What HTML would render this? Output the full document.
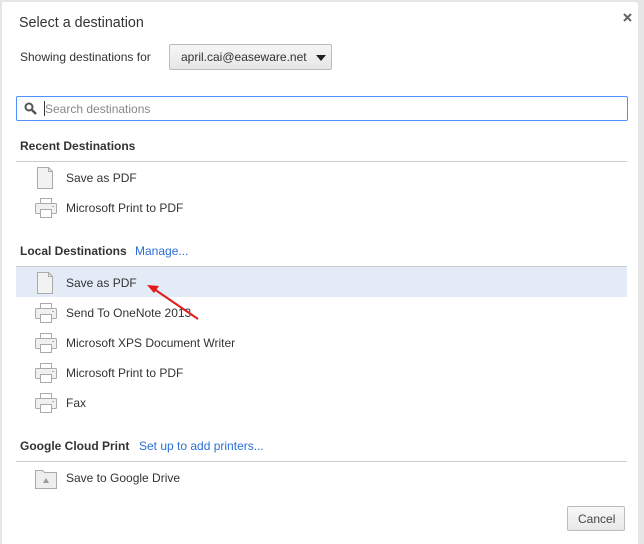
<!DOCTYPE html>
<html><head><style>
body{margin:0;width:644px;height:544px;background:#e6e6e6;font-family:"Liberation Sans",sans-serif;color:#333;position:relative;overflow:hidden}
.dlg{position:absolute;left:2px;top:2px;width:636px;height:542px;background:#fff;border-radius:0 3px 0 0}
.a{position:absolute;white-space:nowrap}
.t{font-size:12px}
.h{font-size:12px;font-weight:bold;color:#333}
.lnk{color:#2a6fd6;font-size:12px}
.line{position:absolute;left:14px;width:611px;height:1px;background:#ccc}
</style></head><body>
<div class="dlg">
<div class="a" style="left:17px;top:13px;font-size:14.3px;color:#333">Select a destination</div>
<svg class="a" style="left:621px;top:11px" width="9" height="9"><path d="M1 1L8 8M8 1L1 8" stroke="#666" stroke-width="2"/></svg>
<div class="a t" style="left:18px;top:48px">Showing destinations for</div>
<div class="a" style="left:167px;top:42px;width:161px;height:24px;border:1px solid #bbb;border-radius:2px;background:linear-gradient(#f6f6f6,#e6e6e6)"></div>
<div class="a t" style="left:179px;top:48px">april.cai@easeware.net</div>
<div class="a" style="left:314px;top:53px;width:0;height:0;border-left:5px solid transparent;border-right:5px solid transparent;border-top:6px solid #222"></div>
<div class="a" style="left:14px;top:94px;width:610px;height:23px;border:1px solid #4d90fe;border-radius:2px"></div>
<svg class="a" style="left:22px;top:100px" width="13" height="13"><circle cx="5" cy="5" r="3.5" fill="none" stroke="#555" stroke-width="2"/><line x1="8" y1="8" x2="12" y2="12" stroke="#555" stroke-width="2.5"/></svg>
<div class="a" style="left:42px;top:99px;width:1px;height:15px;background:#333"></div>
<div class="a t" style="left:43px;top:100px;color:#888">Search destinations</div>
<div class="a h" style="left:18px;top:137px">Recent Destinations</div>
<div class="line" style="top:159px"></div>
<div class="a" style="left:14px;top:265px;width:611px;height:30px;background:#e3ebf7"></div>
<div class="a h" style="left:18px;top:242px">Local Destinations</div>
<div class="a lnk" style="left:133px;top:242px">Manage...</div>
<div class="line" style="top:264px"></div>
<div class="a h" style="left:18px;top:437px">Google Cloud Print</div>
<div class="a lnk" style="left:137px;top:437px">Set up to add printers...</div>
<div class="line" style="top:459px"></div>

<div class="a t" style="left:64px;top:169px">Save as PDF</div>
<div class="a t" style="left:64px;top:199px">Microsoft Print to PDF</div>
<div class="a t" style="left:64px;top:274px">Save as PDF</div>
<div class="a t" style="left:64px;top:304px">Send To OneNote 2013</div>
<div class="a t" style="left:64px;top:334px">Microsoft XPS Document Writer</div>
<div class="a t" style="left:64px;top:364px">Microsoft Print to PDF</div>
<div class="a t" style="left:64px;top:394px">Fax</div>
<div class="a t" style="left:64px;top:469px">Save to Google Drive</div>

<svg class="a" style="left:0;top:0" width="636" height="542">
<defs>
<g id="pg"><path d="M0.5 0.5h11l4 4v17h-15z" fill="#f2f2f2" stroke="#aaa"/><path d="M11.5 0.5v4h4" fill="none" stroke="#aaa"/></g>
<g id="pr"><rect x="5.5" y="0.5" width="11" height="5" fill="#fff" stroke="#aaa"/><rect x="0.5" y="5.5" width="21" height="10" rx="1" fill="#f0f0f0" stroke="#aaa"/><rect x="5.5" y="11.5" width="11" height="8" fill="#fff" stroke="#aaa"/><rect x="17" y="8" width="2" height="1" fill="#aaa"/></g>
</defs>
<use href="#pg" x="35" y="165"/>
<use href="#pr" x="33" y="196"/>
<use href="#pg" x="35" y="270"/>
<use href="#pr" x="33" y="301"/>
<use href="#pr" x="33" y="331"/>
<use href="#pr" x="33" y="361"/>
<use href="#pr" x="33" y="391"/>
<path d="M33.5 468.5h7l2 2h12v16h-21z" fill="#eee" stroke="#aaa"/>
<path d="M41 481l3-5 3 5z" fill="#999"/>
<line x1="196" y1="317" x2="152" y2="287" stroke="#e51b1b" stroke-width="2"/>
<path d="M145 283l12 1-5 7z" fill="#e51b1b"/>
</svg>

<div class="a" style="left:565px;top:504px;width:56px;height:23px;border:1px solid #bbb;border-radius:2px;background:linear-gradient(#f8f8f8,#e8e8e8)"></div>
<div class="a t" style="left:576px;top:510px;color:#444">Cancel</div>
</div>
</body></html>
